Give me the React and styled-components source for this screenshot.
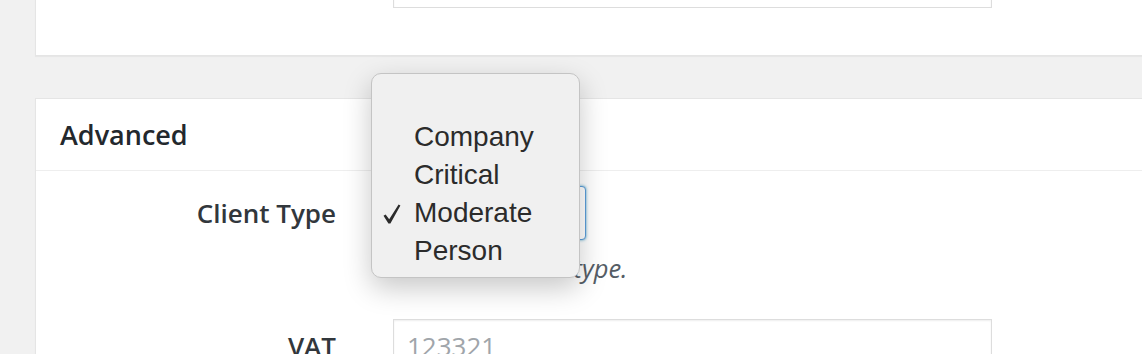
import React from 'react';
import styled, { createGlobalStyle } from 'styled-components';

const Global = createGlobalStyle`
    html, body {
        margin: 0;
        padding: 0;
        background: #f1f1f1;
        overflow: hidden;
    }
    body {
        font-family: 'Open Sans', 'Noto Sans', sans-serif;
        color: #23282d;
    }
`

const Page = styled.div`
    width: 1200px;
    margin-top: -58px;
    padding-left: 35px;
    display: flex;
    flex-direction: column;
    gap: 42px;
`

const Panel = styled.section`
    background: #fff;
    border: 1px solid #e5e5e5;
    box-shadow: 0 1px 1px rgba(0, 0, 0, .04);
`

const PanelHead = styled.h2`
    margin: 0;
    height: 71px;
    padding-left: 24px;
    display: flex;
    align-items: center;
    font-size: 27px;
    font-weight: 600;
    color: #23282d;
    border-bottom: 1px solid #eeeeee;
`

const PanelBody = styled.div`
    padding: ${p => p.$pad || '15px 0 0'};
    display: flex;
    flex-direction: column;
    gap: 36px;
`

const Row = styled.div`
    display: flex;
    align-items: flex-start;
`

const Label = styled.label`
    width: 300px;
    height: 54px;
    flex: none;
    display: flex;
    align-items: center;
    justify-content: flex-end;
    font-size: 26px;
    font-weight: 600;
    color: #32373c;
`

const Field = styled.div`
    position: relative;
    margin-left: 57px;
    display: flex;
    flex-direction: column;
`

const TextInput = styled.div`
    box-sizing: border-box;
    width: 599px;
    height: ${p => p.$h || '54px'};
    padding-left: 13px;
    display: flex;
    align-items: center;
    border: 1px solid #dddddd;
    box-shadow: inset 0 1px 2px rgba(0, 0, 0, .07);
    font-size: 26px;
    color: #a0a5aa;
`

const Select = styled.div`
    box-sizing: border-box;
    width: 193px;
    height: 54px;
    border: 1px solid #5b9dd9;
    border-radius: 4px;
    box-shadow: 0 0 3px rgba(30, 140, 190, .8);
    background: #fff;
`

const Description = styled.p`
    margin: 13px 0 0;
    line-height: 30px;
    font-size: 25.5px;
    font-style: italic;
    color: #555d66;
    white-space: nowrap;
`

const Menu = styled.ul`
    position: absolute;
    left: -22px;
    top: -113px;
    box-sizing: border-box;
    width: 209px;
    height: 205px;
    margin: 0;
    padding: 44px 0 0;
    list-style: none;
    background: #f0f0f0;
    border: 1px solid #c4c4c4;
    border-radius: 10px;
    box-shadow: 0 10px 28px rgba(0, 0, 0, .22);
    font-family: 'Liberation Sans', Arial, sans-serif;
    font-size: 28px;
    color: #2b2b2b;
`

const Option = styled.li`
    position: relative;
    height: 38px;
    line-height: 38px;
    padding-left: 42px;
`

const Check = styled.svg`
    position: absolute;
    left: 11px;
    top: 10px;
    width: 18px;
    height: 20px;
`

const options = ['Company', 'Critical', 'Moderate', 'Person']

function App() {
    return (
        <>
            <Global />
            <Page>
                <Panel>
                    <PanelBody $pad="0 0 47px">
                        <Row>
                            <Label />
                            <Field>
                                <TextInput $h="65px" />
                            </Field>
                        </Row>
                    </PanelBody>
                </Panel>
                <Panel>
                    <PanelHead>Advanced</PanelHead>
                    <PanelBody>
                        <Row>
                            <Label>Client Type</Label>
                            <Field>
                                <Select />
                                <Description>Select the client type.</Description>
                                <Menu>
                                    {options.map(o => (
                                        <Option key={o}>
                                            {o === 'Moderate' && (
                                                <Check viewBox="0 0 18 20">
                                                    <path d="M0.5 11.8 L2.6 10.4 L6.2 15.2 L15.6 0.6 L17.4 1.6 L7.4 19.4 L5.4 19.4 Z" fill="#2b2b2b" />
                                                </Check>
                                            )}
                                            {o}
                                        </Option>
                                    ))}
                                </Menu>
                            </Field>
                        </Row>
                        <Row>
                            <Label>VAT</Label>
                            <Field>
                                <TextInput>123321</TextInput>
                            </Field>
                        </Row>
                    </PanelBody>
                </Panel>
            </Page>
        </>
    )
}

export default App;
